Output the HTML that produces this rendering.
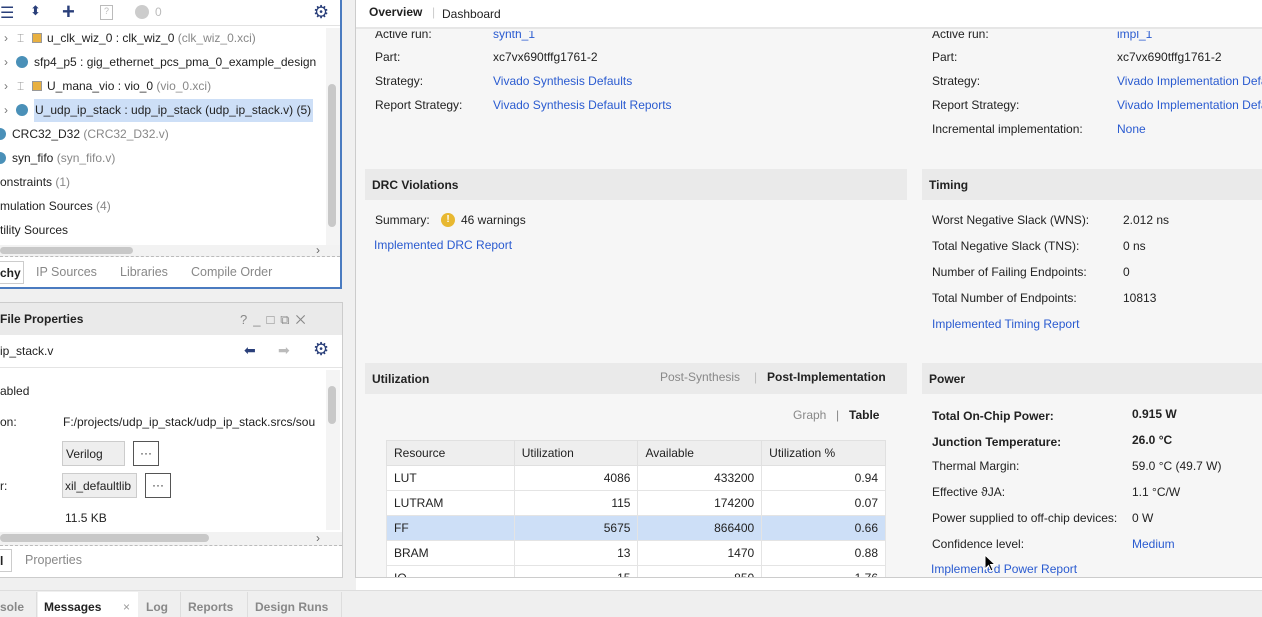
<!DOCTYPE html>
<html><head><meta charset="utf-8"><style>
*{box-sizing:border-box;margin:0;padding:0}
body{width:1262px;height:617px;overflow:hidden;background:#f0f0f0;font-family:"Liberation Sans",Arial,sans-serif;font-size:12px;color:#222;position:relative}
.a{position:absolute;white-space:nowrap}
.g{color:#888}
.l{color:#2a5bd0}
.b{font-weight:bold}
.hdr{position:absolute;background:#eaeaea;height:31px;font-weight:bold;padding:9px 0 0 7px}
table{border-collapse:collapse;position:absolute;left:386px;top:440px;width:500px}
td{height:25px;border:1px solid #e4e4e4;padding:0 7px;text-align:right;background:#fff}
td:first-child{text-align:left}
tr.h td{background:#eeeeee;text-align:left;border-color:#e0e0e0}
tr.s td{background:#cddff7}
.dot{position:absolute;width:12px;height:12px;border-radius:6px;background:#4a90b8}
.sq{position:absolute;width:10px;height:10px;border:1px solid #999;background:#e8b040}
.chev{position:absolute;color:#777}
.pin{position:absolute;color:#999}
</style></head><body>
<!-- left top panel -->
<div class="a" style="left:0;top:0;width:342px;height:289px;background:#fff;border-right:2px solid #4a7bc0;border-bottom:2px solid #4a7bc0"></div>
<div class="a" style="left:0;top:0;width:340px;height:26px;background:#fff;border-bottom:1px solid #e2e2e2"></div>
<div class="a" style="left:0;top:3px;font-size:16px;color:#2a3f7a">☰</div>
<div class="a" style="left:30px;top:3px;font-size:13px;color:#2a3f7a">⬍</div>
<div class="a" style="left:62px;top:-1px;font-size:22px;font-weight:bold;color:#2a3f7a">+</div>
<div class="a" style="left:100px;top:5px;width:13px;height:15px;border:1px solid #bbb;font-size:9px;color:#bbb;text-align:center">?</div>
<div class="a" style="left:135px;top:5px;width:14px;height:14px;border-radius:7px;background:#ccc"></div>
<div class="a" style="left:155px;top:5px;color:#bbb">0</div>
<div class="a" style="left:313px;top:2px;font-size:18px;color:#2a3f7a">⚙</div>
<div class="a" style="left:0;top:27px;width:326px;height:218px;overflow:hidden">
 <span class="chev" style="left:4px;top:4px">›</span><span class="pin" style="left:17px;top:4px">⌶</span><span class="sq" style="left:32px;top:6px"></span><span class="a" style="left:47px;top:4px">u_clk_wiz_0 : clk_wiz_0 <span class="g">(clk_wiz_0.xci)</span></span>
 <span class="chev" style="left:4px;top:28px">›</span><span class="dot" style="left:16px;top:29px"></span><span class="a" style="left:34px;top:28px">sfp4_p5 : gig_ethernet_pcs_pma_0_example_design</span>
 <span class="chev" style="left:4px;top:52px">›</span><span class="pin" style="left:17px;top:52px">⌶</span><span class="sq" style="left:32px;top:54px"></span><span class="a" style="left:47px;top:52px">U_mana_vio : vio_0 <span class="g">(vio_0.xci)</span></span>
 <span class="chev" style="left:4px;top:76px">›</span><span class="dot" style="left:16px;top:77px"></span><span class="a" style="left:34px;top:72px;background:#cddff7;padding:4px 2px 5px 1px;height:23px">U_udp_ip_stack : udp_ip_stack (udp_ip_stack.v) (5)</span>
 <span class="dot" style="left:-6px;top:101px"></span><span class="a" style="left:12px;top:100px">CRC32_D32 <span class="g">(CRC32_D32.v)</span></span>
 <span class="dot" style="left:-6px;top:125px"></span><span class="a" style="left:12px;top:124px">syn_fifo <span class="g">(syn_fifo.v)</span></span>
 <span class="a" style="left:0;top:148px">onstraints <span class="g">(1)</span></span>
 <span class="a" style="left:0;top:172px">mulation Sources <span class="g">(4)</span></span>
 <span class="a" style="left:0;top:196px">tility Sources</span>
</div>
<div class="a" style="left:326px;top:28px;width:14px;height:217px;background:#f4f4f4"></div>
<div class="a" style="left:328px;top:84px;width:8px;height:143px;background:#c8c8c8;border-radius:4px"></div>
<div class="a" style="left:0;top:245px;width:340px;height:12px;background:#f2f2f2;border-bottom:1px dashed #bbb"></div>
<div class="a" style="left:0;top:247px;width:133px;height:7px;background:#c8c8c8;border-radius:4px"></div>
<div class="a" style="left:316px;top:243px;color:#666">›</div>
<div class="a" style="left:0;top:261px;width:24px;height:23px;border:1px solid #ccc;border-left:0;background:#fff;font-weight:bold;padding:4px 0 0 0">chy</div>
<div class="a g" style="left:36px;top:265px;font-size:12.5px">IP Sources</div>
<div class="a g" style="left:120px;top:265px;font-size:12.5px">Libraries</div>
<div class="a g" style="left:191px;top:265px;font-size:12.5px">Compile Order</div>
<!-- file props -->
<div class="a" style="left:0;top:302px;width:343px;height:276px;background:#fff;border:1px solid #ccc;border-left:0"></div>
<div class="a" style="left:0;top:303px;width:342px;height:32px;background:#eaeaea;font-weight:bold;padding:9px 0 0 0">File Properties</div>
<div class="a" style="left:240px;top:312px;color:#888;font-size:13px;letter-spacing:6px">?_□⧉✕</div>
<div class="a" style="left:0;top:335px;width:342px;height:33px;background:#fff;border-bottom:1px solid #e4e4e4;padding:9px 0 0 0">ip_stack.v</div>
<div class="a" style="left:244px;top:342px;color:#2a3f7a;font-size:14px">⬅</div>
<div class="a" style="left:278px;top:342px;color:#bbb;font-size:14px">➡</div>
<div class="a" style="left:313px;top:339px;font-size:18px;color:#2a3f7a">⚙</div>
<div class="a" style="left:0;top:384px">abled</div>
<div class="a" style="left:0;top:415px">on:</div>
<div class="a" style="left:63px;top:415px">F:/projects/udp_ip_stack/udp_ip_stack.srcs/sou</div>
<div class="a" style="left:62px;top:441px;width:63px;height:25px;background:#eee;border:1px solid #ccc;padding:5px 0 0 3px">Verilog</div>
<div class="a" style="left:133px;top:441px;width:26px;height:25px;border:1px solid #555;text-align:center;padding-top:4px">···</div>
<div class="a" style="left:0;top:479px">r:</div>
<div class="a" style="left:62px;top:473px;width:75px;height:25px;background:#eee;border:1px solid #ccc;padding:5px 0 0 2px">xil_defaultlib</div>
<div class="a" style="left:145px;top:473px;width:26px;height:25px;border:1px solid #555;text-align:center;padding-top:4px">···</div>
<div class="a" style="left:65px;top:511px">11.5 KB</div>
<div class="a" style="left:326px;top:370px;width:14px;height:160px;background:#f4f4f4"></div>
<div class="a" style="left:328px;top:386px;width:8px;height:38px;background:#c8c8c8;border-radius:4px"></div>
<div class="a" style="left:0;top:532px;width:342px;height:14px;background:#f2f2f2;border-bottom:1px dashed #bbb"></div>
<div class="a" style="left:0;top:534px;width:209px;height:8px;background:#c8c8c8;border-radius:4px"></div>
<div class="a" style="left:316px;top:531px;color:#666">›</div>
<div class="a" style="left:0;top:549px;width:12px;height:23px;border:1px solid #ccc;border-left:0;background:#fff;font-weight:bold;padding:4px 0 0 0">l</div>
<div class="a g" style="left:25px;top:553px;font-size:12.5px">Properties</div>
<!-- bottom tabs -->
<div class="a" style="left:0;top:590px;width:1262px;height:27px;background:#efefef;border-top:1px solid #ddd"></div>
<div class="a" style="left:0;top:592px;width:37px;height:25px;border-right:1px solid #ddd;padding:8px 0 0 0;color:#888;font-weight:bold">sole</div>
<div class="a" style="left:38px;top:592px;width:100px;height:25px;background:#fff;padding:8px 0 0 6px;font-weight:bold">Messages</div>
<div class="a" style="left:123px;top:600px;color:#999">×</div>
<div class="a" style="left:140px;top:592px;width:41px;height:25px;border-right:1px solid #ddd;padding:8px 0 0 6px;color:#888;font-weight:bold">Log</div>
<div class="a" style="left:182px;top:592px;width:66px;height:25px;border-right:1px solid #ddd;padding:8px 0 0 6px;color:#888;font-weight:bold">Reports</div>
<div class="a" style="left:249px;top:592px;width:93px;height:25px;border-right:1px solid #ddd;padding:8px 0 0 6px;color:#888;font-weight:bold">Design Runs</div>
<!-- main -->
<div class="a" style="left:356px;top:578px;width:906px;height:13px;background:#fff;border-bottom:1px solid #ddd"></div>
<div class="a" style="left:355px;top:0;width:907px;height:578px;background:#f6f6f6;border-left:1px solid #ccc;border-bottom:1px solid #ccc;overflow:hidden">
<div style="position:relative;left:-356px;width:1262px;height:578px">
<div class="a" style="left:356px;top:0;width:906px;height:29px;background:#fff;border-bottom:2px solid #e6e6e6"></div>
<div class="a b" style="left:369px;top:5px">Overview</div>
<div class="a" style="left:432px;top:5px;color:#ccc">|</div>
<div class="a" style="left:442px;top:7px">Dashboard</div>
<div class="a" style="left:375px;top:27px;clip-path:inset(4px 0 0 0)">Active run:</div>
<div class="a l" style="left:493px;top:27px;clip-path:inset(4px 0 0 0)">synth_1</div>
<div class="a" style="left:375px;top:50px">Part:</div><div class="a" style="left:493px;top:50px">xc7vx690tffg1761-2</div>
<div class="a" style="left:375px;top:74px">Strategy:</div><div class="a l" style="left:493px;top:74px">Vivado Synthesis Defaults</div>
<div class="a" style="left:375px;top:98px">Report Strategy:</div><div class="a l" style="left:493px;top:98px">Vivado Synthesis Default Reports</div>
<div class="a" style="left:932px;top:27px;clip-path:inset(4px 0 0 0)">Active run:</div>
<div class="a l" style="left:1117px;top:27px;clip-path:inset(4px 0 0 0)">impl_1</div>
<div class="a" style="left:932px;top:50px">Part:</div><div class="a" style="left:1117px;top:50px">xc7vx690tffg1761-2</div>
<div class="a" style="left:932px;top:74px">Strategy:</div><div class="a l" style="left:1117px;top:74px">Vivado Implementation Defaults</div>
<div class="a" style="left:932px;top:98px">Report Strategy:</div><div class="a l" style="left:1117px;top:98px">Vivado Implementation Default Reports</div>
<div class="a" style="left:932px;top:122px">Incremental implementation:</div><div class="a l" style="left:1117px;top:122px">None</div>

<div class="hdr" style="left:365px;top:169px;width:542px">DRC Violations</div>
<div class="hdr" style="left:922px;top:169px;width:340px">Timing</div>
<div class="a" style="left:375px;top:213px">Summary:</div>
<div class="a" style="left:441px;top:213px;width:14px;height:14px;border-radius:7px;background:#e8b830;color:#fff;font-size:10px;font-weight:bold;text-align:center;line-height:14px">!</div>
<div class="a" style="left:461px;top:213px">46 warnings</div>
<div class="a l" style="left:374px;top:238px">Implemented DRC Report</div>
<div class="a" style="left:932px;top:213px">Worst Negative Slack (WNS):</div><div class="a" style="left:1123px;top:213px">2.012 ns</div>
<div class="a" style="left:932px;top:239px">Total Negative Slack (TNS):</div><div class="a" style="left:1123px;top:239px">0 ns</div>
<div class="a" style="left:932px;top:265px">Number of Failing Endpoints:</div><div class="a" style="left:1123px;top:265px">0</div>
<div class="a" style="left:932px;top:291px">Total Number of Endpoints:</div><div class="a" style="left:1123px;top:291px">10813</div>
<div class="a l" style="left:932px;top:317px">Implemented Timing Report</div>

<div class="hdr" style="left:365px;top:363px;width:542px">Utilization</div>
<div class="a" style="left:660px;top:370px;color:#888">Post-Synthesis</div>
<div class="a" style="left:754px;top:370px;color:#bbb">|</div>
<div class="a b" style="left:767px;top:370px">Post-Implementation</div>
<div class="a" style="left:793px;top:408px;color:#888">Graph</div>
<div class="a" style="left:836px;top:408px;color:#888">|</div>
<div class="a b" style="left:849px;top:408px">Table</div>
<div class="a" style="left:386px;top:440px;width:501px;height:137px;overflow:hidden">
<table style="left:0;top:0">
<tr class="h"><td style="width:128px">Resource</td><td style="width:124px">Utilization</td><td style="width:124px">Available</td><td style="width:124px">Utilization %</td></tr>
<tr><td>LUT</td><td>4086</td><td>433200</td><td>0.94</td></tr>
<tr><td>LUTRAM</td><td>115</td><td>174200</td><td>0.07</td></tr>
<tr class="s"><td>FF</td><td>5675</td><td>866400</td><td>0.66</td></tr>
<tr><td>BRAM</td><td>13</td><td>1470</td><td>0.88</td></tr>
<tr><td>IO</td><td>15</td><td>850</td><td>1.76</td></tr>
</table></div>

<div class="hdr" style="left:922px;top:363px;width:340px">Power</div>
<div class="a b" style="left:932px;top:409px">Total On-Chip Power:</div><div class="a b" style="left:1132px;top:407px">0.915 W</div>
<div class="a b" style="left:932px;top:435px">Junction Temperature:</div><div class="a b" style="left:1132px;top:433px">26.0 °C</div>
<div class="a" style="left:932px;top:459px">Thermal Margin:</div><div class="a" style="left:1132px;top:459px">59.0 °C (49.7 W)</div>
<div class="a" style="left:932px;top:485px">Effective ϑJA:</div><div class="a" style="left:1132px;top:485px">1.1 °C/W</div>
<div class="a" style="left:932px;top:511px">Power supplied to off-chip devices:</div><div class="a" style="left:1132px;top:511px">0 W</div>
<div class="a" style="left:932px;top:537px">Confidence level:</div><div class="a l" style="left:1132px;top:537px">Medium</div>
<div class="a l" style="left:931px;top:562px">Implemented Power Report</div>
<svg class="a" style="left:984px;top:554px" width="12" height="18"><path d="M1 1 L1 15 L4.5 11.5 L7 17 L9 16 L6.5 10.5 L11 10.5 Z" fill="#000" stroke="#fff" stroke-width="1"/></svg>
</div></div>
</body></html>
